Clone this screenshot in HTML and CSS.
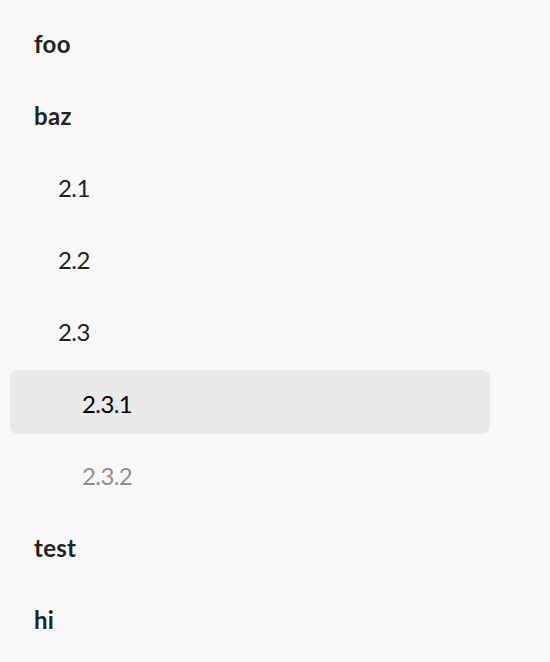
FILE: index.html
```html
<!DOCTYPE html>
<html lang="en">
<head>
    <meta charset="UTF-8">
    <meta name="viewport" content="width=device-width, initial-scale=1.0">
    <link rel="stylesheet" href="styles.css">
    <title>Side nav</title>
</head>
<body>
    <nav class="sidenav">
        <ul class="lista">
            <li><a href="#" class="item nivel1">foo</a></li>
            <li>
                <a href="#" class="item nivel1">baz</a>
                <ul class="lista">
                    <li><a href="#" class="item nivel2">2.1</a></li>
                    <li><a href="#" class="item nivel2">2.2</a></li>
                    <li>
                        <a href="#" class="item nivel2">2.3</a>
                        <ul class="lista">
                            <li><a href="#" class="item nivel3 seleccionado">2.3.1</a></li>
                            <li><a href="#" class="item nivel3 deshabilitado">2.3.2</a></li>
                        </ul>
                    </li>
                </ul>
            </li>
            <li><a href="#" class="item nivel1">test</a></li>
            <li><a href="#" class="item nivel1">hi</a></li>
        </ul>
    </nav>
</body>
</html>
```

FILE: styles.css
```css
*{
    padding: 0;
    margin: 0;
    box-sizing: border-box;
}
html,body{
    width: 100%;
    height: 100%;
}
body{
    background-color: #f8f8f8;
    font-family: "Lato", "Open Sans", sans-serif;
    color: #222;
}
.sidenav{
    width: 480px;
    margin-left: 10px;
    padding-top: 10px;
}
.lista{
    list-style: none;
    display: flex;
    flex-direction: column;
    gap: 8px;
}
.lista .lista{
    margin-top: 8px;
}
.item{
    display: flex;
    align-items: center;
    height: 64px;
    padding-top: 2px;
    border-radius: 8px;
    font-size: 24px;
    color: #222;
    text-decoration: none;
}
.nivel1{
    padding-left: 24px;
    font-weight: bold;
    letter-spacing: 0.3px;
}
.nivel2{
    padding-left: 48px;
    letter-spacing: -0.6px;
}
.nivel3{
    padding-left: 72px;
    letter-spacing: -0.6px;
}
.seleccionado{
    background-color: #e9e9e9;
    color: #000;
}
.deshabilitado{
    color: #8e8e8e;
}
```
